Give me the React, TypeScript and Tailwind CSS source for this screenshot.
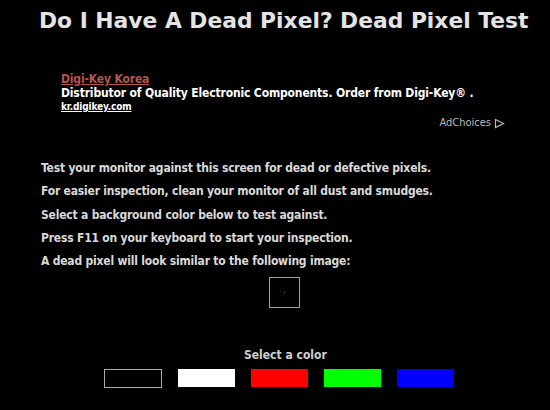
import React from "react";

export default function App() {
  const lines = [
    "Test your monitor against this screen for dead or defective pixels.",
    "For easier inspection, clean your monitor of all dust and smudges.",
    "Select a background color below to test against.",
    "Press F11 on your keyboard to start your inspection.",
    "A dead pixel will look similar to the following image:",
  ];
  return (
    <div className="w-[550px] h-[410px] bg-black overflow-hidden font-['DejaVu_Sans_Condensed','DejaVu_Sans',sans-serif]">
      <div className="pt-[7px] pl-[39px] font-['DejaVu_Sans',sans-serif] text-[21.8px] leading-[28px] font-bold text-[#e4e4e4] whitespace-nowrap">
        Do I Have A Dead Pixel? Dead Pixel Test
      </div>
      <div className="mt-[37px] pl-[61px] font-bold whitespace-nowrap tracking-[-0.15px]">
        <div className="text-[12px] leading-[14px] text-[#b9534f] underline">Digi-Key Korea</div>
        <div className="text-[12px] leading-[14px] text-white">
          Distributor of Quality Electronic Components. Order from Digi-Key® .
        </div>
        <div className="text-[10px] leading-[13px] text-white underline">kr.digikey.com</div>
      </div>
      <div className="flex justify-end items-center pr-[45px] mt-[3px] text-[11px] leading-[14px] text-[#bbbbbb] gap-[3px]">
        <span>AdChoices</span>
        <svg width="11" height="11" viewBox="0 0 11 11">
          <path d="M1.5 1.5 L9.5 5.5 L1.5 9.5 Z" fill="none" stroke="#bbbbbb" strokeWidth="1.2" />
        </svg>
      </div>
      <div className="mt-[27px] pl-[41px] text-[12px] leading-[23.3px] font-bold tracking-[-0.2px] text-[#d9d9d9] whitespace-nowrap">
        {lines.map((l) => (
          <div key={l}>{l}</div>
        ))}
      </div>
      <div className="mt-[4px] ml-[269px] w-[31px] h-[31px] border border-[#a0a0a0] flex items-center justify-center">
        <div className="w-[1px] h-[1px] bg-[#666]" />
      </div>
      <div className="mt-[39px] pl-[244px] text-[12px] leading-[16px] font-bold text-[#d0d0d0] whitespace-nowrap">
        Select a color
      </div>
      <div className="mt-[6px] pl-[104px] flex gap-[16px]">
        <div className="w-[58px] h-[19px] border border-[#aaaaaa] bg-black" />
        <div className="w-[57px] h-[18px] bg-white" />
        <div className="w-[57px] h-[18px] bg-[#ff0000]" />
        <div className="w-[57px] h-[18px] bg-[#00ff00]" />
        <div className="w-[57px] h-[18px] bg-[#0000ff]" />
      </div>
    </div>
  );
}
